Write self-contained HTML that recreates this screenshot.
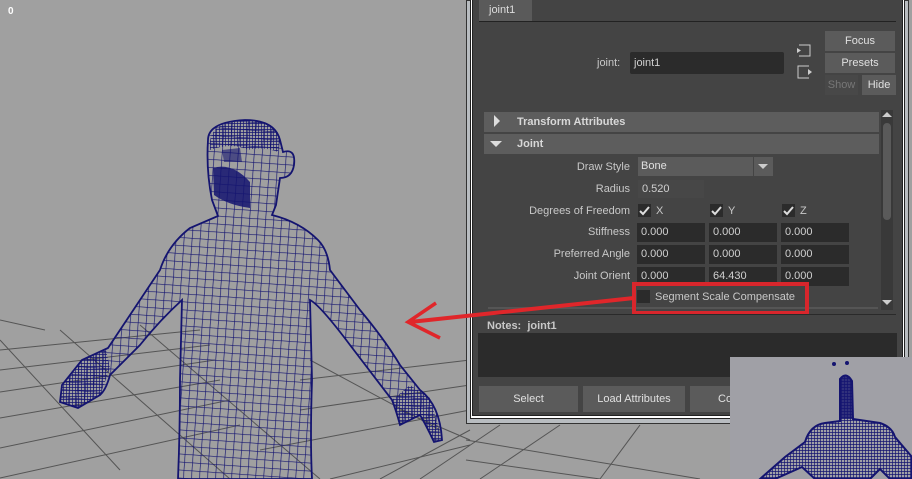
<!DOCTYPE html>
<html><head><meta charset="utf-8"><style>
*{margin:0;padding:0;box-sizing:border-box}
body{width:912px;height:479px;overflow:hidden;background:#a0a0a0;font-family:"Liberation Sans",sans-serif;position:relative}
.a{position:absolute}
.t{color:#c8c8c8;font-size:11px;white-space:nowrap}
.f{background:#2b2b2b;color:#d0d0d0;font-size:11px;padding:3px 0 0 4px}
.b{background:#5b5b5b;color:#e0e0e0;font-size:11px;text-align:center}
.hd{background:#5d5d5d;color:#d8d8d8;font-size:11px;font-weight:bold}
.cb{background:#2b2b2b;width:13px;height:13px}
</style></head><body>
<svg class="a" style="left:0;top:0" width="912" height="479">
<defs>
<pattern id="m" width="8" height="8" patternUnits="userSpaceOnUse" patternTransform="rotate(4)">
<path d="M0 0H8M0 0V8" stroke="#141470" stroke-width="1.3" fill="none"/>
</pattern>
<pattern id="d" width="3" height="3" patternUnits="userSpaceOnUse">
<path d="M0 0H3M0 0V3" stroke="#141470" stroke-width="1.4" fill="none"/>
</pattern>
</defs>
<g stroke="#555" stroke-width="1" fill="none">
<path d="M0 350L200 330M0 370L210 345M0 392L215 360M0 418L220 380M0 448L230 400M0 478L240 425"/>
<path d="M0 340L120 470M0 320L45 330M60 330L230 479M140 325L320 479M310 360L440 430M400 410L470 440M380 479L470 430"/>
<path d="M300 380L470 360M300 410L470 385M260 450L470 410M330 479L470 445"/>
<path d="M466 440L700 479M500 425L420 479M560 425L480 479M640 425L600 479M466 460L600 479"/>
</g>
<path d="M208 140Q208 122 245 120Q275 120 280 140L283 152Q296 148 294 165Q292 178 280 178L276 205L272 215Q300 222 318 240Q328 250 330 270L360 310Q385 340 400 365L420 390Q440 405 442 440L434 442Q426 425 420 415L400 425Q396 410 392 400L350 345Q320 305 310 300L312 380Q310 440 312 479H178Q180 430 180 380L182 300Q160 320 140 345L110 375Q106 390 100 395L78 408L60 402L62 385L82 360L108 348Q140 300 160 270Q168 245 190 228L218 216L212 200Q206 170 208 140Z" fill="url(#m)" stroke="#141470" stroke-width="1.8"/>
<path d="M210 140Q214 120 248 120Q276 122 280 140L278 152Q262 146 248 150Q232 142 210 150Z" fill="url(#d)"/>
<path d="M213 168Q232 162 250 182L250 208Q228 205 214 195Z" fill="#141470" opacity=".85"/>
<path d="M222 150L240 148L242 162L224 162Z" fill="#141470" opacity=".6"/>
<path d="M62 385L82 360L106 350L110 368L100 395L78 408L60 402Z" fill="url(#d)"/>
<path d="M392 400L410 385L430 398L442 440L434 442L420 415L400 425Z" fill="url(#d)"/>
</svg>
<div class="a" style="left:8px;top:6px;color:#fff;font-size:10px;font-weight:bold">0</div>
<!-- panel -->
<div class="a" style="left:466px;top:0;width:443px;height:424px;background:#b8bcc0;border:1px solid #333"></div>
<div class="a" style="left:470px;top:0;width:435px;height:419px;border:1px solid #222;border-top:0;background:#fff"></div>
<div class="a" style="left:472px;top:0;width:431px;height:416px;background:#444;border:1px solid #222;border-top:0"></div>
<div class="a t" style="left:479px;top:0;width:53px;height:21px;background:#5a5a5a;color:#ddd;padding:4px 0 0 10px;font-size:11px">joint1</div>
<div class="a" style="left:479px;top:21px;width:417px;height:1px;background:#222"></div>
<div class="a t" style="left:597px;top:57px">joint:</div>
<div class="a f" style="left:630px;top:52px;width:154px;height:22px;padding-top:5px;border-radius:2px">joint1</div>
<svg class="a" style="left:796px;top:43px" width="18" height="40"><path d="M3 2H14V13H3" stroke="#ccc" fill="none"/><path d="M1 5L5 7.5L1 10Z" fill="#ccc"/><path d="M13 23H2V35H13" stroke="#ccc" fill="none"/><path d="M12 26L16 29L12 32Z" fill="#ccc"/></svg>
<div class="a b" style="left:825px;top:31px;width:70px;height:20px;padding-top:4px">Focus</div>
<div class="a b" style="left:825px;top:53px;width:70px;height:20px;padding-top:4px">Presets</div>
<div class="a b" style="left:825px;top:75px;width:33px;height:20px;padding-top:4px;background:#484848;color:#777">Show</div>
<div class="a b" style="left:862px;top:75px;width:34px;height:20px;padding-top:4px">Hide</div>
<div class="a hd" style="left:484px;top:112px;width:395px;height:20px;padding:4px 0 0 33px">Transform Attributes</div>
<div class="a" style="left:494px;top:115px;width:0;height:0;border-left:6px solid #ddd;border-top:6px solid transparent;border-bottom:6px solid transparent"></div>
<div class="a hd" style="left:484px;top:134px;width:395px;height:20px;padding:4px 0 0 33px">Joint</div>
<div class="a" style="left:490px;top:141px;width:0;height:0;border-top:6px solid #ddd;border-left:6px solid transparent;border-right:6px solid transparent"></div>
<div class="a" style="left:881px;top:110px;width:12px;height:200px;background:#393939"></div>
<div class="a" style="left:883px;top:123px;width:8px;height:97px;background:#5a5a5a;border-radius:4px"></div>
<div class="a" style="left:882px;top:112px;border-bottom:5px solid #ccc;border-left:5px solid transparent;border-right:5px solid transparent"></div>
<div class="a" style="left:882px;top:300px;border-top:5px solid #ccc;border-left:5px solid transparent;border-right:5px solid transparent"></div>
<div class="a t" style="right:282px;top:161px">Draw Style</div>
<div class="a b" style="left:638px;top:157px;width:115px;height:19px;text-align:left;padding:3px 0 0 3px">Bone</div>
<div class="a b" style="left:754px;top:157px;width:19px;height:19px"></div>
<div class="a" style="left:758px;top:164px;border-top:5px solid #ccc;border-left:5px solid transparent;border-right:5px solid transparent"></div>
<div class="a t" style="right:282px;top:183px">Radius</div>
<div class="a f" style="left:638px;top:180px;width:66px;height:18px;background:#474747">0.520</div>
<div class="a t" style="right:282px;top:205px">Degrees of Freedom</div>
<div class="a cb" style="left:638px;top:204px"></div><div class="a t" style="left:656px;top:205px">X</div>
<div class="a cb" style="left:710px;top:204px"></div><div class="a t" style="left:728px;top:205px">Y</div>
<div class="a cb" style="left:782px;top:204px"></div><div class="a t" style="left:800px;top:205px">Z</div>
<svg class="a" style="left:638px;top:204px" width="160" height="14"><g stroke="#ddd" stroke-width="2" fill="none"><path d="M2 7L5 10L11 3"/><path d="M74 7L77 10L83 3"/><path d="M146 7L149 10L155 3"/></g></svg>
<div class="a t" style="right:282px;top:226px">Stiffness</div>
<div class="a t" style="right:282px;top:248px">Preferred Angle</div>
<div class="a t" style="right:282px;top:270px">Joint Orient</div>
<div class="a f" style="left:637px;top:223px;width:68px;height:19px">0.000</div>
<div class="a f" style="left:709px;top:223px;width:68px;height:19px">0.000</div>
<div class="a f" style="left:781px;top:223px;width:68px;height:19px">0.000</div>
<div class="a f" style="left:637px;top:245px;width:68px;height:19px">0.000</div>
<div class="a f" style="left:709px;top:245px;width:68px;height:19px">0.000</div>
<div class="a f" style="left:781px;top:245px;width:68px;height:19px">0.000</div>
<div class="a f" style="left:637px;top:267px;width:68px;height:19px">0.000</div>
<div class="a f" style="left:709px;top:267px;width:68px;height:19px">64.430</div>
<div class="a f" style="left:781px;top:267px;width:68px;height:19px">0.000</div>
<div class="a" style="left:488px;top:307px;width:390px;height:2px;background:#555"></div>
<div class="a" style="left:632px;top:282px;width:177px;height:33px;border:4px solid #d8262c"></div>
<div class="a cb" style="left:637px;top:290px"></div>
<div class="a t" style="left:655px;top:291px">Segment Scale Compensate</div>
<div class="a" style="left:478px;top:314px;width:418px;height:1px;background:#2a2a2a"></div>
<div class="a t" style="left:487px;top:320px;font-weight:bold">Notes:&nbsp; joint1</div>
<div class="a" style="left:478px;top:333px;width:419px;height:44px;background:#2b2b2b"></div>
<div class="a b" style="left:479px;top:386px;width:99px;height:26px;padding-top:7px">Select</div>
<div class="a b" style="left:583px;top:386px;width:102px;height:26px;padding-top:7px">Load Attributes</div>
<div class="a b" style="left:690px;top:386px;width:60px;height:26px;padding:7px 0 0 28px;text-align:left">Co</div>
<svg class="a" style="left:0;top:0" width="912" height="479">
<path d="M634 298L410 322" stroke="#e0262a" stroke-width="4"/>
<path d="M436 303L408 322L440 338" stroke="#e0262a" stroke-width="3.5" fill="none"/>
</svg>
<!-- inset -->
<div class="a" style="left:730px;top:357px;width:182px;height:122px;background:#a0a0a6"></div>
<svg class="a" style="left:730px;top:357px" width="182" height="122">
<defs><pattern id="d2" width="3" height="3" patternUnits="userSpaceOnUse"><path d="M0 0H3M0 0V3" stroke="#141470" stroke-width="1.4" fill="none"/></pattern></defs>
<circle cx="104" cy="7" r="2" fill="#141470"/><circle cx="117" cy="6" r="2" fill="#141470"/>
<path d="M110 22Q116 14 122 24L123 62L150 66Q162 70 165 80L182 100V122H160L150 112L140 122H85L72 110L45 122H30L55 100L75 85Q80 68 95 66L110 64Z" fill="url(#d2)" stroke="#141470" stroke-width="2"/>
<path d="M110 22Q116 14 122 24L123 62H110Z" fill="#141470" opacity=".8"/>
</svg>
</body></html>
